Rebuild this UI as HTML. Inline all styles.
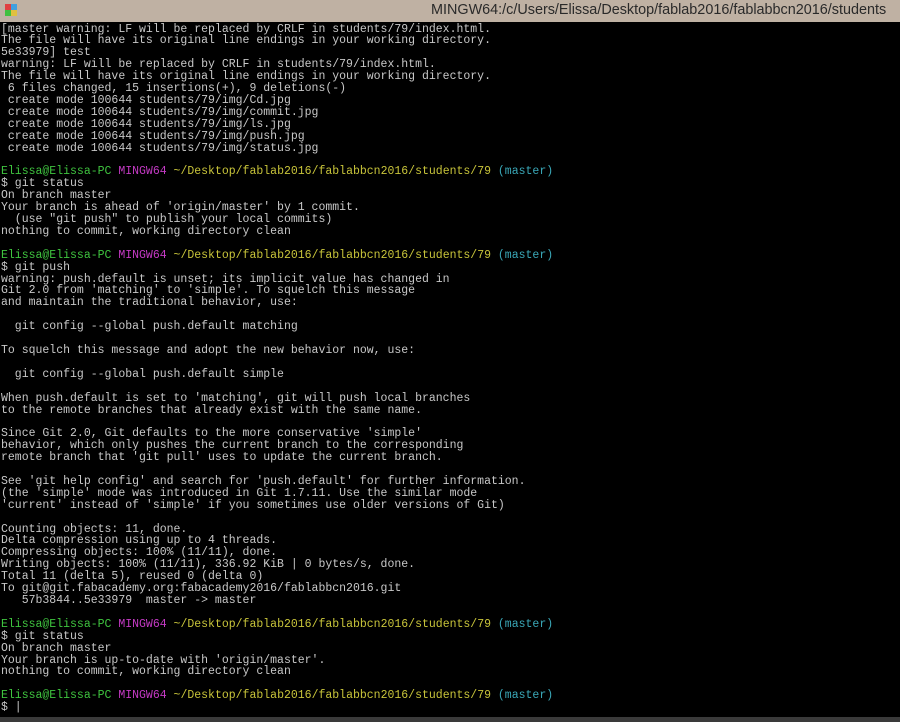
<!DOCTYPE html>
<html><head><meta charset="utf-8"><style>
html,body{margin:0;padding:0;background:#000;width:900px;height:722px;overflow:hidden}
.title{position:absolute;left:0;top:0;width:900px;height:22px;background:#bfb1a3}
.title span{position:absolute;left:431px;top:2px;font:14.4px "Liberation Sans",sans-serif;color:#2a2a2a;white-space:nowrap}
.term{position:absolute;left:1px;top:23.5px;font:11.5px/11.9px "Liberation Mono",monospace;color:#c8c8c8;white-space:pre;margin:0}
.g{color:#3fc43f}.m{color:#c43ac4}.y{color:#c8c43a}.c{color:#3aa8b8}
.bot{position:absolute;left:0;top:717px;width:900px;height:5px;background:#3a3a3a}
</style></head><body>
<div class="title"><svg style="position:absolute;left:4px;top:3px" width="14" height="14"><rect x="1" y="1" width="6" height="6" fill="#e04040"/><rect x="7" y="1" width="6" height="6" fill="#40a0e0"/><rect x="1" y="7" width="6" height="6" fill="#40c040"/><rect x="7" y="7" width="6" height="6" fill="#e0c040"/></svg><span>MINGW64:/c/Users/Elissa/Desktop/fablab2016/fablabbcn2016/students</span></div>
<pre class="term">[master warning: LF will be replaced by CRLF in students/79/index.html.
The file will have its original line endings in your working directory.
5e33979] test
warning: LF will be replaced by CRLF in students/79/index.html.
The file will have its original line endings in your working directory.
 6 files changed, 15 insertions(+), 9 deletions(-)
 create mode 100644 students/79/img/Cd.jpg
 create mode 100644 students/79/img/commit.jpg
 create mode 100644 students/79/img/ls.jpg
 create mode 100644 students/79/img/push.jpg
 create mode 100644 students/79/img/status.jpg

<span class="g">Elissa@Elissa-PC</span> <span class="m">MINGW64</span> <span class="y">~/Desktop/fablab2016/fablabbcn2016/students/79</span> <span class="c">(master)</span>
$ git status
On branch master
Your branch is ahead of 'origin/master' by 1 commit.
  (use "git push" to publish your local commits)
nothing to commit, working directory clean

<span class="g">Elissa@Elissa-PC</span> <span class="m">MINGW64</span> <span class="y">~/Desktop/fablab2016/fablabbcn2016/students/79</span> <span class="c">(master)</span>
$ git push
warning: push.default is unset; its implicit value has changed in
Git 2.0 from 'matching' to 'simple'. To squelch this message
and maintain the traditional behavior, use:

  git config --global push.default matching

To squelch this message and adopt the new behavior now, use:

  git config --global push.default simple

When push.default is set to 'matching', git will push local branches
to the remote branches that already exist with the same name.

Since Git 2.0, Git defaults to the more conservative 'simple'
behavior, which only pushes the current branch to the corresponding
remote branch that 'git pull' uses to update the current branch.

See 'git help config' and search for 'push.default' for further information.
(the 'simple' mode was introduced in Git 1.7.11. Use the similar mode
'current' instead of 'simple' if you sometimes use older versions of Git)

Counting objects: 11, done.
Delta compression using up to 4 threads.
Compressing objects: 100% (11/11), done.
Writing objects: 100% (11/11), 336.92 KiB | 0 bytes/s, done.
Total 11 (delta 5), reused 0 (delta 0)
To git@git.fabacademy.org:fabacademy2016/fablabbcn2016.git
   57b3844..5e33979  master -&gt; master

<span class="g">Elissa@Elissa-PC</span> <span class="m">MINGW64</span> <span class="y">~/Desktop/fablab2016/fablabbcn2016/students/79</span> <span class="c">(master)</span>
$ git status
On branch master
Your branch is up-to-date with 'origin/master'.
nothing to commit, working directory clean

<span class="g">Elissa@Elissa-PC</span> <span class="m">MINGW64</span> <span class="y">~/Desktop/fablab2016/fablabbcn2016/students/79</span> <span class="c">(master)</span>
$ |</pre>
<div class="bot"></div>
</body></html>
